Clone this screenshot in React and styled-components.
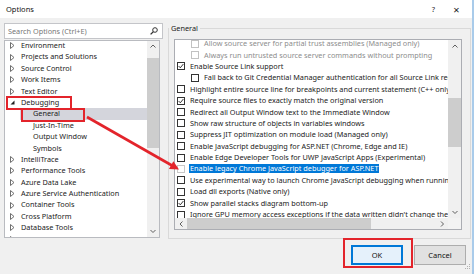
import React from 'react';
import styled, { createGlobalStyle } from 'styled-components';

const FONT = `"Noto Sans", "Open Sans", "DejaVu Sans", sans-serif`;
const FS = '7.3px';

const Global = createGlobalStyle`
  html, body { margin: 0; padding: 0; background: #f0f0f0; }
  body { font-family: ${FONT}; }
  * { box-sizing: border-box; }
`;

const Window = styled.div`
  position: relative;
  width: 474px;
  height: 274px;
  background: #f0f0f0;
  border-right: 2px solid #a9cbea;
  display: flex;
  flex-direction: column;
  font-family: ${FONT};
  font-size: ${FS};
  color: #1b1b1b;
  overflow: hidden;
`;

const TitleBar = styled.div`
  height: 18px;
  flex: none;
  display: flex;
  align-items: center;
  padding: 0 4px 0 6px;
  background: #ffffff;
`;

const Title = styled.span`
  flex: 1;
  font-size: 7.5px;
  color: #111;
`;

const TitleButton = styled.span`
  width: 23px;
  text-align: center;
  font-size: ${(p) => (p.$big ? '11px' : '7.5px')};
  color: #222;
`;

const Main = styled.div`
  display: flex;
  gap: 5px;
  padding: 4px 0 0 4px;
  height: 221px;
  flex: none;
`;

const LeftCol = styled.div`
  width: 159px;
  display: flex;
  flex-direction: column;
`;

const SearchBox = styled.div`
  margin-top: 1px;
  height: 16px;
  width: 159px;
  border: 1px solid #c4c5c9;
  background: #fff;
  display: flex;
  align-items: center;
  padding: 0 4px 0 3px;
  color: #777;
`;

const SearchText = styled.span`
  flex: 1;
`;

const Tree = styled.div`
  margin-top: 1px;
  width: 156px;
  height: 198px;
  border: 1px solid #b9bbc0;
  background: #fff;
  display: grid;
  grid-template-columns: 1fr 12px;
  overflow: hidden;
`;

const TreeRows = styled.div`
  overflow: hidden;
  margin-top: -1px;
`;

const TreeRow = styled.div`
  height: 11.4px;
  line-height: 11.4px;
  display: flex;
  align-items: center;
  white-space: nowrap;
  padding-left: ${(p) => (p.$child ? '28px' : '5px')};
  background: ${(p) =>
    p.$selected
      ? 'linear-gradient(to right, transparent 15px, #d4d5dc 15px)'
      : 'transparent'};
`;

const Expander = styled.span`
  width: 5px;
  height: 7px;
  margin-right: 6px;
  display: flex;
  align-items: center;
  justify-content: center;
`;

const ScrollV = styled.div`
  display: flex;
  flex-direction: column;
  background: #f0f0f0;
`;

const ArrowBtn = styled.div`
  flex: none;
  height: ${(p) => p.$h || 12}px;
  width: ${(p) => p.$w || 'auto'};
  display: flex;
  align-items: center;
  justify-content: center;
`;

const Track = styled.div`
  flex: 1;
  padding-top: ${(p) => p.$offset}px;
  display: flex;
  flex-direction: ${(p) => (p.$horizontal ? 'row' : 'column')};
`;

const Thumb = styled.div`
  background: #cdcdcd;
  ${(p) =>
    p.$horizontal
      ? `width: ${p.$size}px; height: 100%;`
      : `height: ${p.$size}px; width: 100%;`}
`;

const Group = styled.fieldset`
  width: 303px;
  margin: 0;
  padding: 5px 8px 8px 5px;
  border: 1px solid #d9d9d9;
  min-width: 0;
`;

const Legend = styled.legend`
  margin-left: -5px;
  padding: 0 2px;
  line-height: 12px;
  font-size: ${FS};
  color: #1b1b1b;
`;

const ListBox = styled.div`
  width: 288px;
  height: 191px;
  border: 1px solid #abadb3;
  background: #fff;
  display: grid;
  grid-template-columns: 1fr 13px;
  grid-template-rows: 1fr 11px;
`;

const ListRows = styled.div`
  overflow: hidden;
`;

const ListInner = styled.div`
  margin-top: -2px;
`;

const OptRow = styled.div`
  height: 11.4px;
  display: flex;
  align-items: center;
  white-space: nowrap;
  padding-left: ${(p) => (p.$indent ? '16px' : '2px')};
  color: ${(p) => (p.$disabled ? '#8d8d8d' : '#1b1b1b')};
`;

const Box = styled.span`
  flex: none;
  width: 8px;
  height: 8px;
  border: 1px solid ${(p) => (p.$disabled ? '#c2c2c2' : p.$faint ? '#c8c8c8' : '#333')};
  background: #fff;
  margin-right: 5px;
  display: flex;
  align-items: center;
  justify-content: center;
`;

const OptLabel = styled.span`
  line-height: 9px;
  padding: 0 1px;
  margin-left: -1px;
  background: ${(p) => (p.$selected ? '#0078d7' : 'transparent')};
  color: ${(p) => (p.$selected ? '#fff' : 'inherit')};
`;

const ScrollH = styled.div`
  display: flex;
  background: #f0f0f0;
`;

const Corner = styled.div`
  background: #f3f3f3;
`;

const Footer = styled.div`
  position: relative;
  flex: 1;
  display: flex;
  justify-content: flex-end;
  align-items: flex-start;
  gap: 11px;
  padding: 6px 6px 0 0;
`;

const Button = styled.div`
  width: 52px;
  height: 20px;
  display: flex;
  align-items: center;
  justify-content: center;
  font-size: 7.5px;
  color: #111;
  background: ${(p) => (p.$default ? '#e5f1fb' : '#e1e1e1')};
  border: 1px solid ${(p) => (p.$default ? '#0078d7' : '#adadad')};
  box-shadow: ${(p) => (p.$default ? 'inset 0 0 0 1px #0078d7' : 'none')};
`;

const Grip = styled.svg`
  position: absolute;
  right: 1px;
  bottom: 4px;
`;

const RedBox = styled.div`
  position: absolute;
  left: ${(p) => p.$x}px;
  top: ${(p) => p.$y}px;
  width: ${(p) => p.$w}px;
  height: ${(p) => p.$h}px;
  border: 2px solid #e3242b;
  pointer-events: none;
`;

const Overlay = styled.svg`
  position: absolute;
  left: 0;
  top: 0;
  pointer-events: none;
`;

const Chevron = ({ dir }) => {
  const pts = {
    up: '0.5,3.5 3,1 5.5,3.5',
    down: '0.5,1 3,3.5 5.5,1',
    left: '3.5,0.5 1,3 3.5,5.5',
    right: '1,0.5 3.5,3 1,5.5',
  }[dir];
  const vertical = dir === 'up' || dir === 'down';
  return (
    <svg width={vertical ? 6 : 5} height={vertical ? 5 : 6}>
      <polyline points={pts} fill="none" stroke="#5f5f5f" strokeWidth="1" />
    </svg>
  );
};

const Caret = ({ open }) =>
  open ? (
    <svg width="5" height="5">
      <polygon points="4.5,0.5 4.5,4.5 0.5,4.5" fill="#1e1e1e" />
    </svg>
  ) : (
    <svg width="5" height="7">
      <polygon points="0.5,0.5 4,3.5 0.5,6.5" fill="none" stroke="#606060" strokeWidth="0.9" />
    </svg>
  );

const Check = () => (
  <svg width="6" height="6" viewBox="0 0 6 6">
    <polyline points="0.6,3 2.3,4.8 5.4,1" fill="none" stroke="#222" strokeWidth="0.9" />
  </svg>
);

const treeItems = [
  { label: 'Environment' },
  { label: 'Projects and Solutions' },
  { label: 'Source Control' },
  { label: 'Work Items' },
  { label: 'Text Editor' },
  { label: 'Debugging', open: true },
  { label: 'General', child: true, selected: true },
  { label: 'Just-In-Time', child: true },
  { label: 'Output Window', child: true },
  { label: 'Symbols', child: true },
  { label: 'IntelliTrace' },
  { label: 'Performance Tools' },
  { label: 'Azure Data Lake' },
  { label: 'Azure Service Authentication' },
  { label: 'Container Tools' },
  { label: 'Cross Platform' },
  { label: 'Database Tools' },
  { label: 'F# Tools' },
];

const options = [
  { label: 'Allow source server for partial trust assemblies (Managed only)', indent: true, disabled: true },
  { label: 'Always run untrusted source server commands without prompting', indent: true, disabled: true },
  { label: 'Enable Source Link support', checked: true },
  { label: 'Fall back to Git Credential Manager authentication for all Source Link requests', indent: true },
  { label: 'Highlight entire source line for breakpoints and current statement (C++ only)' },
  { label: 'Require source files to exactly match the original version', checked: true },
  { label: 'Redirect all Output Window text to the Immediate Window' },
  { label: 'Show raw structure of objects in variables windows' },
  { label: 'Suppress JIT optimization on module load (Managed only)' },
  { label: 'Enable JavaScript debugging for ASP.NET (Chrome, Edge and IE)' },
  { label: 'Enable Edge Developer Tools for UWP JavaScript Apps (Experimental)' },
  { label: 'Enable legacy Chrome JavaScript debugger for ASP.NET', selected: true },
  { label: 'Use experimental way to launch Chrome JavaScript debugging when running Visual Studio as Administrator' },
  { label: 'Load dll exports (Native only)' },
  { label: 'Show parallel stacks diagram bottom-up', checked: true },
  { label: "Ignore GPU memory access exceptions if the data written didn't change the value" },
];

export default function App() {
  return (
    <>
      <Global />
      <Window>
        <TitleBar>
          <Title>Options</Title>
          <TitleButton>?</TitleButton>
          <TitleButton $big>×</TitleButton>
        </TitleBar>

        <Main>
          <LeftCol>
            <SearchBox>
              <SearchText>Search Options (Ctrl+E)</SearchText>
              <svg width="8" height="8" viewBox="0 0 8 8">
                <circle cx="5" cy="3" r="2.3" fill="none" stroke="#333" strokeWidth="1" />
                <line x1="3.3" y1="4.7" x2="0.6" y2="7.4" stroke="#333" strokeWidth="1.3" />
              </svg>
            </SearchBox>
            <Tree>
              <TreeRows>
                {treeItems.map((t) => (
                  <TreeRow key={t.label} $child={t.child} $selected={t.selected}>
                    {!t.child && (
                      <Expander>
                        <Caret open={t.open} />
                      </Expander>
                    )}
                    <span>{t.label}</span>
                  </TreeRow>
                ))}
              </TreeRows>
              <ScrollV>
                <ArrowBtn $h={11}>
                  <Chevron dir="up" />
                </ArrowBtn>
                <Track $offset={6}>
                  <Thumb $size={90} />
                </Track>
                <ArrowBtn $h={11}>
                  <Chevron dir="down" />
                </ArrowBtn>
              </ScrollV>
            </Tree>
          </LeftCol>

          <Group>
            <Legend>General</Legend>
            <ListBox>
              <ListRows>
                <ListInner>
                  {options.map((o, i) => (
                    <OptRow key={i} $indent={o.indent} $disabled={o.disabled}>
                      <Box $disabled={o.disabled} $faint={o.selected}>
                        {o.checked && <Check />}
                      </Box>
                      <OptLabel $selected={o.selected}>{o.label}</OptLabel>
                    </OptRow>
                  ))}
                </ListInner>
              </ListRows>
              <ScrollV>
                <ArrowBtn>
                  <Chevron dir="up" />
                </ArrowBtn>
                <Track $offset={46}>
                  <Thumb $size={49} />
                </Track>
                <ArrowBtn>
                  <Chevron dir="down" />
                </ArrowBtn>
              </ScrollV>
              <ScrollH>
                <ArrowBtn $w="12px" $h={11}>
                  <Chevron dir="left" />
                </ArrowBtn>
                <Track $horizontal $offset={0}>
                  <Thumb $horizontal $size={184} />
                </Track>
                <ArrowBtn $w="12px" $h={11}>
                  <Chevron dir="right" />
                </ArrowBtn>
              </ScrollH>
              <Corner />
            </ListBox>
          </Group>
        </Main>

        <Footer>
          <Button $default>OK</Button>
          <Button>Cancel</Button>
          <Grip width="6" height="6" viewBox="0 0 6 6">
            <rect x="4" y="0" width="1" height="1" fill="#b0b0b0" />
            <rect x="2" y="2" width="1" height="1" fill="#b0b0b0" />
            <rect x="4" y="2" width="1" height="1" fill="#b0b0b0" />
            <rect x="0" y="4" width="1" height="1" fill="#b0b0b0" />
            <rect x="2" y="4" width="1" height="1" fill="#b0b0b0" />
            <rect x="4" y="4" width="1" height="1" fill="#b0b0b0" />
          </Grip>
        </Footer>

        <RedBox $x={6} $y={96} $w={66} $h={14} />
        <RedBox $x={21} $y={108} $w={64} $h={14} />
        <RedBox $x={343} $y={238} $w={70} $h={30} />

        <Overlay width="474" height="274">
          <line x1="87" y1="117" x2="172" y2="165.5" stroke="#e3242b" strokeWidth="2.6" />
          <polygon points="179,169.5 168.9,169 173.4,161.3" fill="#e3242b" />
        </Overlay>
      </Window>
    </>
  );
}
